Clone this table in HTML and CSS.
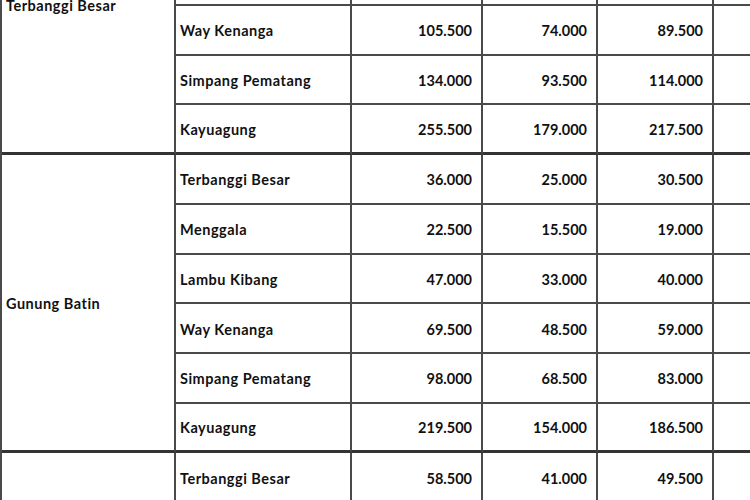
FILE: index.html
```html
<!DOCTYPE html>
<html lang="id">
<head>
<meta charset="utf-8">
<title>Tarif Tol</title>
<link rel="stylesheet" href="styles.css">
</head>
<body>
<div class="viewport">
<table class="tarif">
  <colgroup>
    <col class="c-origin">
    <col class="c-dest">
    <col class="c-n1">
    <col class="c-n2">
    <col class="c-n3">
    <col class="c-n4">
  </colgroup>
  <tbody>
    <tr>
      <td class="origin group-end" rowspan="6">Terbanggi Besar</td>
      <td class="dest">Gunung Batin</td>
      <td class="num">36.000</td><td class="num">25.000</td><td class="num">30.500</td><td class="num"></td>
    </tr>
    <tr>
      <td class="dest">Menggala</td>
      <td class="num">58.500</td><td class="num">41.000</td><td class="num">49.500</td><td class="num"></td>
    </tr>
    <tr>
      <td class="dest">Lambu Kibang</td>
      <td class="num">83.000</td><td class="num">58.000</td><td class="num">70.500</td><td class="num"></td>
    </tr>
    <tr>
      <td class="dest">Way Kenanga</td>
      <td class="num">105.500</td><td class="num">74.000</td><td class="num">89.500</td><td class="num"></td>
    </tr>
    <tr>
      <td class="dest">Simpang Pematang</td>
      <td class="num">134.000</td><td class="num">93.500</td><td class="num">114.000</td><td class="num"></td>
    </tr>
    <tr class="group-end">
      <td class="dest">Kayuagung</td>
      <td class="num">255.500</td><td class="num">179.000</td><td class="num">217.500</td><td class="num"></td>
    </tr>

    <tr>
      <td class="origin group-end" rowspan="6">Gunung Batin</td>
      <td class="dest">Terbanggi Besar</td>
      <td class="num">36.000</td><td class="num">25.000</td><td class="num">30.500</td><td class="num"></td>
    </tr>
    <tr>
      <td class="dest">Menggala</td>
      <td class="num">22.500</td><td class="num">15.500</td><td class="num">19.000</td><td class="num"></td>
    </tr>
    <tr>
      <td class="dest">Lambu Kibang</td>
      <td class="num">47.000</td><td class="num">33.000</td><td class="num">40.000</td><td class="num"></td>
    </tr>
    <tr>
      <td class="dest">Way Kenanga</td>
      <td class="num">69.500</td><td class="num">48.500</td><td class="num">59.000</td><td class="num"></td>
    </tr>
    <tr>
      <td class="dest">Simpang Pematang</td>
      <td class="num">98.000</td><td class="num">68.500</td><td class="num">83.000</td><td class="num"></td>
    </tr>
    <tr class="group-end">
      <td class="dest">Kayuagung</td>
      <td class="num">219.500</td><td class="num">154.000</td><td class="num">186.500</td><td class="num"></td>
    </tr>

    <tr>
      <td class="origin group-end" rowspan="6">Menggala</td>
      <td class="dest">Terbanggi Besar</td>
      <td class="num">58.500</td><td class="num">41.000</td><td class="num">49.500</td><td class="num"></td>
    </tr>
    <tr>
      <td class="dest">Gunung Batin</td>
      <td class="num">22.500</td><td class="num">15.500</td><td class="num">19.000</td><td class="num"></td>
    </tr>
    <tr>
      <td class="dest">Lambu Kibang</td>
      <td class="num">25.000</td><td class="num">17.500</td><td class="num">21.000</td><td class="num"></td>
    </tr>
    <tr>
      <td class="dest">Way Kenanga</td>
      <td class="num">47.000</td><td class="num">33.000</td><td class="num">40.000</td><td class="num"></td>
    </tr>
    <tr>
      <td class="dest">Simpang Pematang</td>
      <td class="num">75.500</td><td class="num">53.000</td><td class="num">64.000</td><td class="num"></td>
    </tr>
    <tr class="group-end">
      <td class="dest">Kayuagung</td>
      <td class="num">197.000</td><td class="num">138.000</td><td class="num">167.500</td><td class="num"></td>
    </tr>
  </tbody>
</table>
</div>
</body>
</html>
```

FILE: styles.css
```css
html, body {
  margin: 0;
  padding: 0;
  background: #ffffff;
}

.viewport {
  width: 750px;
  height: 500px;
  overflow: hidden;
}

.tarif {
  margin-top: -145px;
  border-collapse: separate;
  border-spacing: 0;
  table-layout: fixed;
  width: 834px;
  border-left: 2px solid #4a4a4a;
  border-top: 2px solid #4a4a4a;
  font-family: Lato, "Open Sans", sans-serif;
  font-weight: 700;
  font-size: 14.5px;
  color: #111;
}

.c-origin { width: 174px; }
.c-dest { width: 176px; }
.c-n1 { width: 131px; }
.c-n2 { width: 115px; }
.c-n3 { width: 116px; }
.c-n4 { width: 120px; }

.tarif td {
  height: 49.7px;
  box-sizing: border-box;
  padding: 2px 4px 0;
  border-right: 2px solid #4a4a4a;
  border-bottom: 2px solid #4a4a4a;
  vertical-align: middle;
  white-space: nowrap;
}

.tarif td.origin,
.tarif td.dest {
  letter-spacing: 0.5px;
}

.tarif td.num {
  text-align: right;
  padding-right: 9px;
}

.tarif tr.group-end td,
.tarif td.origin.group-end {
  border-bottom: 3px solid #333;
}
```
